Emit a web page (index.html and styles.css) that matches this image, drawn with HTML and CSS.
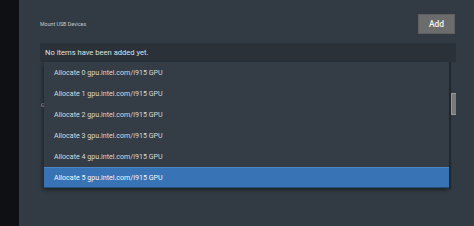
FILE: index.html
```html
<!DOCTYPE html>
<html>
<head>
    <title>Mount USB Devices</title>
    <link rel="stylesheet" href="styles.css">
</head>
<body>
    <div class="sidebar"></div>
    <div class="main">
        <div class="head">
            <span class="label">Mount USB Devices</span>
            <button class="add">Add</button>
        </div>
        <div class="list">
            <div class="empty">No items have been added yet.</div>
            <div class="list-body">
                <div class="content">
                    <span class="label sub">G</span>
                </div>
                <div class="track"><div class="thumb"></div></div>
                <ul class="menu">
                    <li>Allocate 0 gpu.intel.com/i915 GPU</li>
                    <li>Allocate 1 gpu.intel.com/i915 GPU</li>
                    <li>Allocate 2 gpu.intel.com/i915 GPU</li>
                    <li>Allocate 3 gpu.intel.com/i915 GPU</li>
                    <li>Allocate 4 gpu.intel.com/i915 GPU</li>
                    <li class="sel">Allocate 5 gpu.intel.com/i915 GPU</li>
                </ul>
            </div>
        </div>
    </div>
</body>
</html>
```
FILE: styles.css
```css
html, body {
    margin: 0;
    height: 100%;
}
body {
    display: flex;
    background-color: #323a43;
    font-family: Roboto, "Liberation Sans", sans-serif;
    overflow: hidden;
}
.sidebar {
    width: 19px;
    background-color: #0e1013;
}
.main {
    flex: 1;
    padding: 14px 18px 0 21px;
}
.head {
    display: flex;
    justify-content: space-between;
    align-items: center;
    padding-right: 1px;
}
.label {
    font-size: 5.3px;
    color: #c4c9ce;
}
button.add {
    width: 37px;
    height: 20px;
    background-color: #6c6c6c;
    border: 1px solid #5d5f61;
    color: #f2f2f2;
    font-family: Roboto, "Liberation Sans", sans-serif;
    font-size: 8.5px;
    font-weight: 500;
    padding: 0;
}
.list {
    margin-top: 9px;
}
.empty {
    height: 19px;
    line-height: 19px;
    padding-left: 5px;
    background-color: #2a3139;
    color: #dde1e5;
    font-size: 7.6px;
}
.list-body {
    position: relative;
    display: flex;
    height: 128px;
}
.content {
    flex: 1;
    padding: 37px 0 0 1px;
    line-height: 6px;
}
.sub {
    font-size: 5.8px;
    color: #b3b9bf;
}
.track {
    width: 5px;
    border-left: 2px solid #252b31;
}
.thumb {
    margin-top: 31px;
    height: 20px;
    background-color: #7a7a7a;
    border: 1px solid #9a9a9a;
    border-right: 0;
}
.menu {
    position: absolute;
    left: 4px;
    top: 0;
    width: 405px;
    margin: 0;
    padding: 0;
    list-style: none;
    background-color: #343c45;
    box-shadow: -1px 2px 4px rgba(0, 0, 0, 0.45);
}
.menu li {
    height: 21px;
    line-height: 21px;
    padding-left: 10px;
    font-size: 7.1px;
    color: #d6dade;
}
.menu li.sel {
    background-color: #3873b5;
    color: #f4f7fb;
    border-top: 1px solid #4a86c6;
    border-bottom: 1px solid #274d7a;
    height: 19px;
    line-height: 19px;
}
```
